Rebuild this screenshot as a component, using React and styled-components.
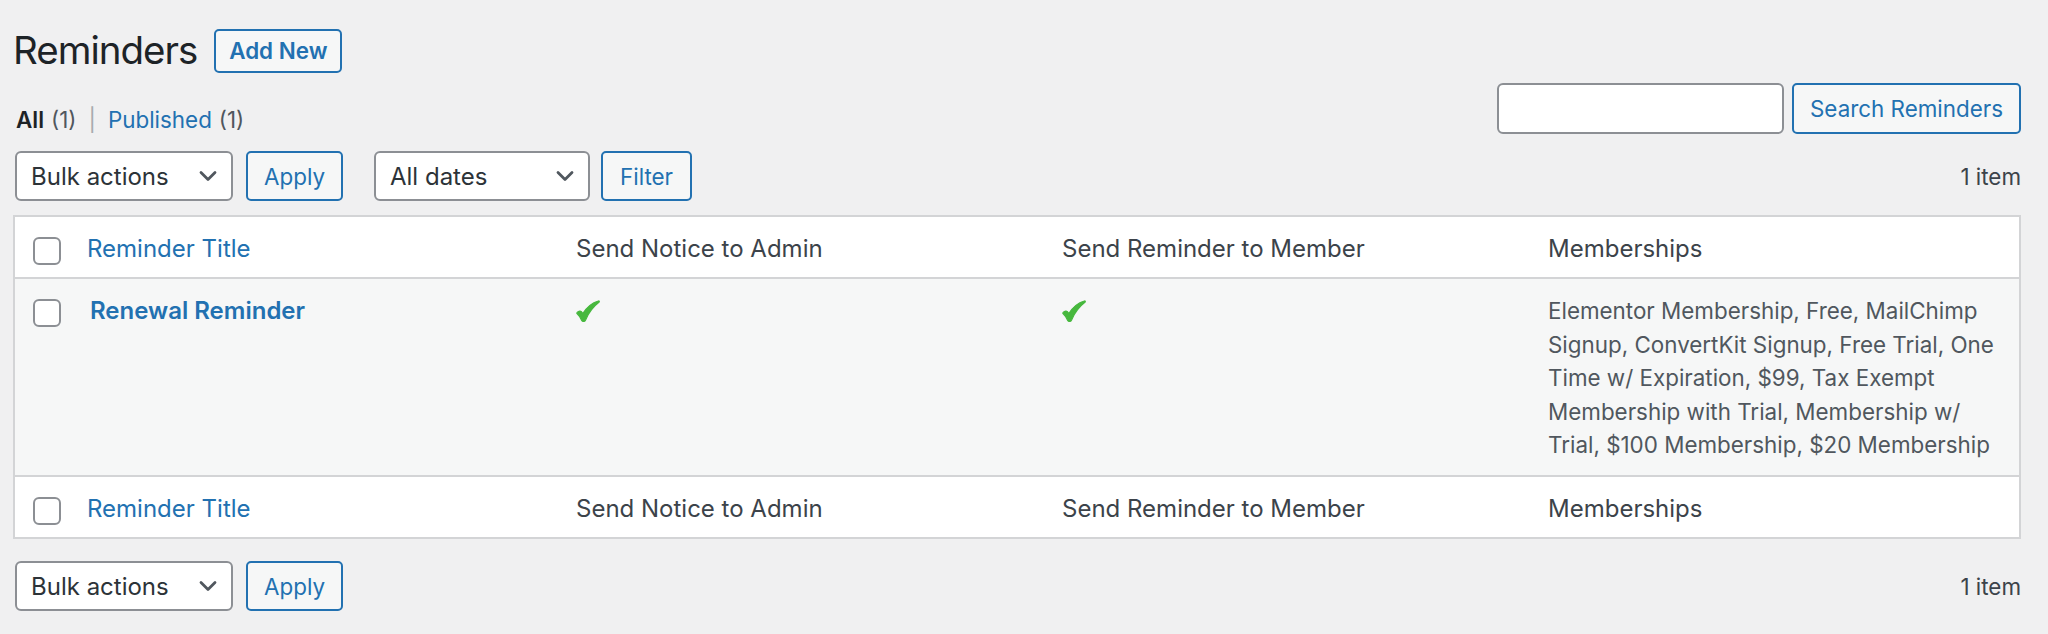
import React from "react";
import styled, { createGlobalStyle } from "styled-components";

const GlobalStyle = createGlobalStyle`
  html, body { margin: 0; padding: 0; }
  body {
    background: #f0f0f1;
    font-family: Inter, "Noto Sans", "Liberation Sans", sans-serif;
    color: #3c434a;
  }
`;

const Page = styled.div`
  padding: 25px 27px 20px 13px;
`;

const TitleRow = styled.div`
  display: flex;
  align-items: center;
  gap: 17px;
`;

const Title = styled.h1`
  margin: 0;
  font-size: 38.5px;
  font-weight: 400;
  line-height: 51.5px;
  color: #1d2327;
  letter-spacing: -1px;
`;

const Button = styled.button`
  box-sizing: border-box;
  height: ${(p) => p.$h || 50}px;
  width: ${(p) => (p.$w ? `${p.$w}px` : "auto")};
  padding: 0 ${(p) => p.$px || 17}px;
  border: 2px solid #2271b1;
  border-radius: 5px;
  background: #f6f7f7;
  color: #2271b1;
  font-family: inherit;
  font-size: 22.4px;
  font-weight: ${(p) => p.$weight || 400};
  display: inline-flex;
  align-items: center;
  justify-content: center;
  white-space: nowrap;
  cursor: pointer;
`;

const TopBar = styled.div`
  display: flex;
  justify-content: space-between;
  align-items: flex-start;
  margin-top: 6px;
`;

const Views = styled.ul`
  list-style: none;
  margin: 20px 0 0;
  padding: 0 0 0 3px;
  display: flex;
  align-items: baseline;
  font-size: 22.4px;
  line-height: 33.5px;
  color: #646970;
`;

const ViewItem = styled.li`
  display: flex;
  gap: 7px;
  color: ${(p) => (p.$current ? "#1d2327" : "#2271b1")};
  font-weight: ${(p) => (p.$current ? 600 : 400)};
`;

const Count = styled.span`
  color: #50575e;
  font-weight: 400;
`;

const Sep = styled.span`
  color: #a7aaad;
  margin: 0 12px;
`;

const SearchBox = styled.div`
  display: flex;
  gap: 8px;
`;

const SearchInput = styled.div`
  box-sizing: border-box;
  width: 287px;
  height: 51px;
  border: 2px solid #8c8f94;
  border-radius: 6px;
  background: #fff;
`;

const TableNav = styled.div`
  display: flex;
  align-items: center;
  height: 50px;
  margin: ${(p) => p.$m};
`;

const Actions = styled.div`
  display: flex;
  align-items: center;
  gap: ${(p) => p.$gap || 13}px;
  margin-left: 2px;
  margin-right: ${(p) => p.$mr || 0}px;
`;

const SelectBox = styled.div`
  box-sizing: border-box;
  width: ${(p) => p.$w}px;
  height: 50px;
  border: 2px solid #8c8f94;
  border-radius: 6px;
  background: #fff;
  display: flex;
  align-items: center;
  justify-content: space-between;
  padding: 0 14px 0 14px;
  font-size: 24px;
  color: #2c3338;
`;

const Chevron = () => (
  <svg width="18" height="12" viewBox="0 0 18 12" fill="none">
    <path d="M2 2.5 L9 9.5 L16 2.5" stroke="#50575e" strokeWidth="2.8" strokeLinecap="round" strokeLinejoin="round" />
  </svg>
);

const ItemCount = styled.div`
  margin-left: auto;
  font-size: 22.4px;
  color: #3c434a;
`;

const Table = styled.div`
  border: 2px solid #d3d4d6;
  background: #fff;
`;

const Row = styled.div`
  display: grid;
  grid-template-columns: 60px repeat(4, 1fr);
  background: ${(p) => (p.$alt ? "#f6f7f7" : "#fff")};
  border-top: ${(p) => (p.$divider ? "2px solid #d3d4d6" : "none")};
  min-height: ${(p) => p.$min || 0}px;
`;

const Cell = styled.div`
  padding: ${(p) => p.$pad || "14px 15px 10px"};
  font-size: ${(p) => p.$fs || 24}px;
  line-height: ${(p) => p.$lh || 36}px;
  color: ${(p) => p.$color || "#3c434a"};
  font-weight: ${(p) => p.$weight || 400};
`;

const CheckCell = styled.div`
  padding-left: 18px;
  padding-top: ${(p) => p.$top}px;
`;

const CheckBox = styled.div`
  box-sizing: border-box;
  width: 28px;
  height: 28px;
  border: 2px solid #8c8f94;
  border-radius: 6px;
  background: #fff;
`;

const Link = styled.span`
  color: #2271b1;
`;

const CheckMark = styled.svg`
  display: block;
  margin-top: 6px;
`;

const GreenCheck = () => (
  <CheckMark width="24" height="22" viewBox="0 0 24 22">
    <path
      d="M1.2 12.4 C3 10.4 5.2 10.6 6.8 13.6 C10.5 7.6 15.5 3 22.4 1 C23.4 0.8 23.6 1.8 22.9 2.3 C16.8 7 12.4 13.2 9.6 20 C8.8 21.8 6.6 22 5.7 20.4 C4.3 17.6 2.9 15.2 1.2 13.8 C0.7 13.4 0.7 12.9 1.2 12.4 Z"
      fill="#47b83e"
      stroke="#47b83e"
      strokeWidth="1.2"
      strokeLinejoin="round"
    />
  </CheckMark>
);

const HeaderRow = ({ divider }) => (
  <Row $divider={divider}>
    <CheckCell $top={20}>
      <CheckBox />
    </CheckCell>
    <Cell $pad="14px 12px 10px">
      <Link>Reminder Title</Link>
    </Cell>
    <Cell>Send Notice to Admin</Cell>
    <Cell>Send Reminder to Member</Cell>
    <Cell>Memberships</Cell>
  </Row>
);

const BottomNav = ({ m }) => (
  <TableNav $m={m}>
    <Actions>
      <SelectBox $w={218}>
        Bulk actions
        <Chevron />
      </SelectBox>
      <Button $w={97}>Apply</Button>
    </Actions>
    <ItemCount>1 item</ItemCount>
  </TableNav>
);

export default function App() {
  return (
    <>
      <GlobalStyle />
      <Page>
        <TitleRow>
          <Title>Reminders</Title>
          <Button $h={44} $w={128} $weight={600}>
            Add New
          </Button>
        </TitleRow>

        <TopBar>
          <Views>
            <ViewItem $current>
              All <Count>(1)</Count>
            </ViewItem>
            <Sep>|</Sep>
            <ViewItem>
              Published <Count>(1)</Count>
            </ViewItem>
          </Views>
          <SearchBox>
            <SearchInput />
            <Button $h={51} $w={229}>
              Search Reminders
            </Button>
          </SearchBox>
        </TopBar>

        <TableNav $m="15px 0 14px">
          <Actions $mr={29}>
            <SelectBox $w={218}>
              Bulk actions
              <Chevron />
            </SelectBox>
            <Button $w={97}>Apply</Button>
          </Actions>
          <Actions $gap={11}>
            <SelectBox $w={216}>
              All dates
              <Chevron />
            </SelectBox>
            <Button $w={91}>Filter</Button>
          </Actions>
          <ItemCount>1 item</ItemCount>
        </TableNav>

        <Table>
          <HeaderRow />
          <Row $alt $divider $min={196}>
            <CheckCell $top={20}>
              <CheckBox />
            </CheckCell>
            <Cell $pad="15px 15px 13px" $lh={33.5} $weight={600}>
              <Link>Renewal Reminder</Link>
            </Cell>
            <Cell $pad="15px 15px 13px" $lh={33.5}>
              <GreenCheck />
            </Cell>
            <Cell $pad="15px 15px 13px" $lh={33.5}>
              <GreenCheck />
            </Cell>
            <Cell $pad="15px 15px 13px" $fs={22.4} $lh={33.5} $color="#50575e">
              Elementor Membership, Free, MailChimp Signup, ConvertKit Signup, Free Trial, One Time w/ Expiration, $99, Tax Exempt Membership with Trial, Membership w/ Trial, $100 Membership, $20 Membership
            </Cell>
          </Row>
          <HeaderRow divider />
        </Table>

        <BottomNav m="22px 0 0" />
      </Page>
    </>
  );
}
